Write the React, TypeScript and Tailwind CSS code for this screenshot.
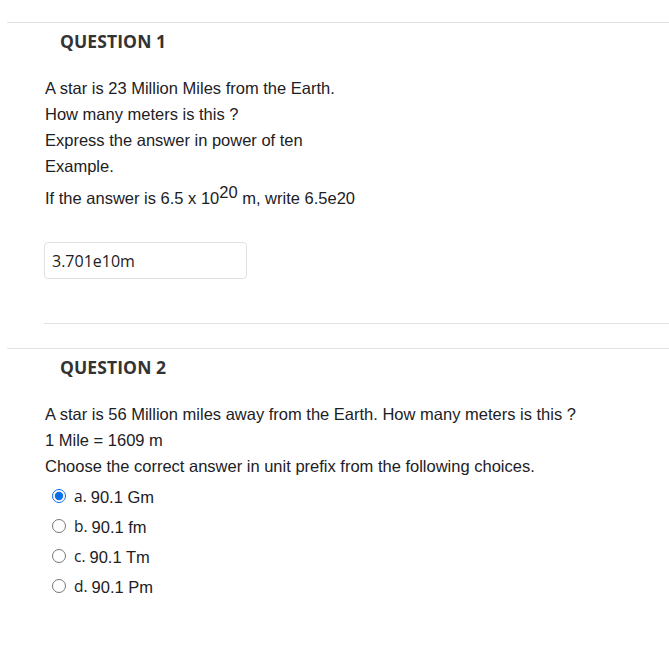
import React from "react";

const body = "font-['Liberation_Sans',Arial,sans-serif] text-[16.5px] leading-[26px] text-[#1d2125]";
const head = "font-['Open_Sans',sans-serif] font-bold text-[17.5px] leading-[24px] text-[#333333] tracking-[0.1px]";

function Option({ letter, text, checked }: { letter: string; text: string; checked?: boolean }) {
  return (
    <label className="flex items-center h-[30px]">
      <input
        type="radio"
        name="q2"
        defaultChecked={checked}
        className="w-[14px] h-[14px] ml-[8px] mr-[8px] -mt-[2px] accent-[#0b6fe8]"
      />
      <span className="font-['Open_Sans',sans-serif] text-[15.5px] text-[#1d2125] mr-[4px]">{letter}.</span>
      <span className={body + " leading-[30px]"}>{text}</span>
    </label>
  );
}

export default function App() {
  return (
    <div className="bg-white w-[669px] h-[646px] pt-[22px]">
      <section className="ml-[7px] border-t border-[#e3e3e3]">
        <h2 className={head + " pl-[53px] pt-[6px]"}>QUESTION 1</h2>
        <div className="ml-[37px] pt-[22px] pb-[44px] border-b border-[#e3e3e3]">
          <div className={body + " pl-px"}>
            <p>A star is 23 Million Miles from the Earth.</p>
            <p>How many meters is this ?</p>
            <p>Express the answer in power of ten</p>
            <p>Example.</p>
            <p>
              If the answer is 6.5 x 10<span className="align-[6px]">20</span> m, write 6.5e20
            </p>
          </div>
          <div className="mt-[31px] w-[203px] h-[37px] border border-[#dee2e6] rounded-[4px] flex items-center pl-[7px] font-['Open_Sans',sans-serif] text-[16px] text-[#1d2125]">
            3.701e10m
          </div>
        </div>
      </section>
      <section className="ml-[7px] mt-[24px] border-t border-[#e3e3e3]">
        <h2 className={head + " pl-[53px] pt-[6px]"}>QUESTION 2</h2>
        <div className="ml-[37px] pt-[22px]">
          <div className={body + " pl-px"}>
            <p>A star is 56 Million miles away from the Earth. How many meters is this ?</p>
            <p>1 Mile = 1609 m</p>
            <p>Choose the correct answer in unit prefix from the following choices.</p>
          </div>
          <div className="mt-[3px]">
            <Option letter="a" text="90.1 Gm" checked />
            <Option letter="b" text="90.1 fm" />
            <Option letter="c" text="90.1 Tm" />
            <Option letter="d" text="90.1 Pm" />
          </div>
        </div>
      </section>
    </div>
  );
}
